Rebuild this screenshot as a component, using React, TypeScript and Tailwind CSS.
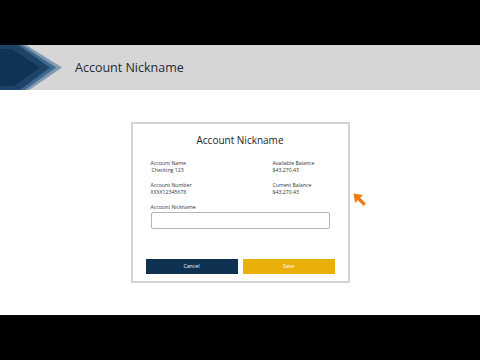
import React from "react";

export default function App() {
  const font = { fontFamily: '"Open Sans", "Noto Sans", sans-serif' };
  return (
    <div className="w-[480px] h-[360px] flex flex-col bg-white overflow-hidden relative" style={font}>
      <div className="h-[45px] bg-black shrink-0" />
      <div className="h-[45px] bg-[#d6d6d6] shrink-0 flex items-center relative">
        <svg width="64" height="45" viewBox="0 0 64 45" className="absolute left-0 top-0">
          <polygon points="0,0 26,0 62,22.5 29,45 0,45" fill="#7f9bb3" />
          <polygon points="0,0 22,0 56,22.5 25,45 0,45" fill="#3f6b92" />
          <polygon points="0,0 18,0 50,22.5 20,45 0,45" fill="#1d4468" />
          <polygon points="0,4 12,4 40,22.5 14,41 0,41" fill="#0e3354" />
        </svg>
        <span className="ml-[75px] mt-[2px] text-[12.5px] text-[#1f2a36] leading-none">Account Nickname</span>
      </div>
      <div className="flex-1 flex items-center justify-center relative">
        <div className="w-[219px] h-[161px] border-2 border-[#d4d4d4] bg-white flex flex-col px-[13px] pt-[9px] pb-[7px]">
          <div className="text-center text-[10px] text-[#222] leading-none mt-[2px]">Account Nickname</div>
          <div className="grid grid-cols-[1fr_auto] mt-[15px] px-[5px] text-[5.2px] leading-[7px] text-[#333]">
            <div>
              <div className="font-medium">Account Name</div>
              <div className="pl-[1px]">Checking 123</div>
            </div>
            <div className="w-[57px]">
              <div className="font-medium">Available Balance</div>
              <div>$43,270.43</div>
            </div>
            <div className="mt-[8px]">
              <div className="font-medium">Account Number</div>
              <div>XXXX12345678</div>
            </div>
            <div className="mt-[8px] w-[57px]">
              <div className="font-medium">Current Balance</div>
              <div>$43,270.43</div>
            </div>
          </div>
          <div className="px-[5px] mt-[8px] text-[5.2px] leading-[7px] text-[#333] font-medium">Account Nickname</div>
          <div className="mx-[5px] mt-[1px] h-[17px] border border-[#b5b5b5] rounded-[2px] bg-white" />
          <div className="flex-1" />
          <div className="flex gap-[5px]">
            <div className="w-[92px] h-[15px] bg-[#0f3152] text-white text-[5.2px] flex items-center justify-center">Cancel</div>
            <div className="w-[92px] h-[15px] bg-[#e8b008] text-white text-[5.2px] flex items-center justify-center">Save</div>
          </div>
        </div>
        <svg width="16" height="16" viewBox="0 0 16 16" className="absolute left-[352px] top-[102px]">
          <path d="M1.5 1.5 L11 3 L8.2 5.8 L14 11.6 L11.6 14 L5.8 8.2 L3 11 Z" fill="#f07c14" />
        </svg>
      </div>
      <div className="h-[45px] bg-black shrink-0" />
    </div>
  );
}
